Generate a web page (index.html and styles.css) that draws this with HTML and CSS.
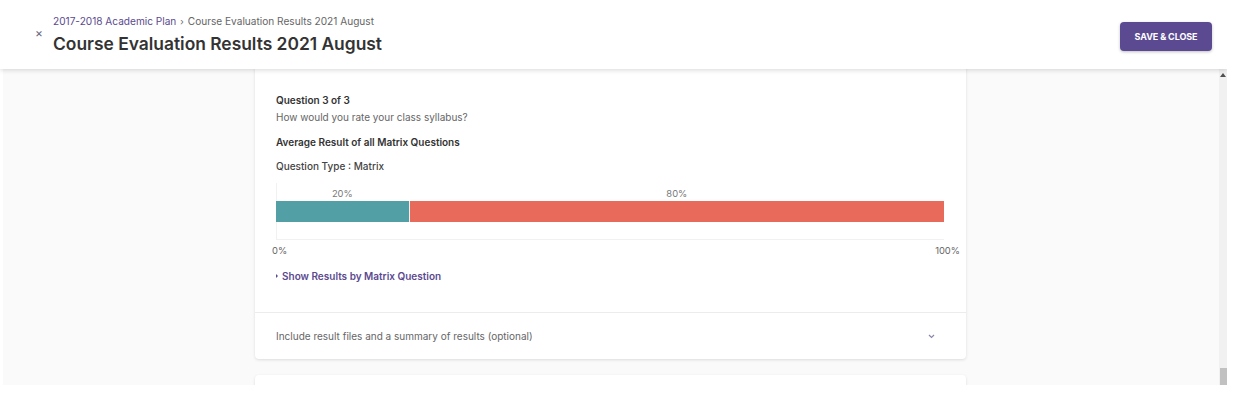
FILE: index.html
```html
<!DOCTYPE html>
<html lang="en">
<head>
<meta charset="utf-8">
<title>Course Evaluation Results 2021 August</title>
<link rel="stylesheet" href="styles.css">
</head>
<body>
<div class="frame">
  <header class="topbar">
    <button class="close" aria-label="Close">×</button>
    <div class="titles">
      <div class="crumbs"><a class="crumb-link">2017-2018 Academic Plan</a><span class="sep">›</span><span class="crumb-current">Course Evaluation Results 2021 August</span></div>
      <h1 class="title">Course Evaluation Results 2021 August</h1>
    </div>
    <button class="save">SAVE &amp; CLOSE</button>
  </header>
  <div class="viewport">
    <main class="content">
      <section class="card">
        <div class="question">
          <div class="q-num">Question 3 of 3</div>
          <div class="q-text">How would you rate your class syllabus?</div>
          <div class="q-avg">Average Result of all Matrix Questions</div>
          <div class="q-type">Question Type : Matrix</div>
          <div class="chart">
            <div class="plot">
              <div class="bar">
                <div class="seg teal" style="width:20%"><span class="seg-label">20%</span></div>
                <div class="seg coral" style="width:80%"><span class="seg-label">80%</span></div>
              </div>
            </div>
            <div class="axis"><span>0%</span><span>100%</span></div>
          </div>
          <div class="toggle"><span class="tri"></span>Show Results by Matrix Question</div>
        </div>
        <div class="include">
          <span>Include result files and a summary of results (optional)</span>
          <svg class="chev" width="7" height="5" viewBox="0 0 7 5"><path d="M1 1 L3.5 3.5 L6 1" fill="none" stroke="#8c87a8" stroke-width="1.2"/></svg>
        </div>
      </section>
      <section class="card next"></section>
    </main>
    <div class="scrollbar">
      <div class="arrow"></div>
      <div class="thumb"></div>
    </div>
  </div>
</div>
</body>
</html>
```
FILE: styles.css
```css
* { box-sizing: border-box; }
html, body { margin: 0; padding: 0; background: #fff; }
body { font-family: Inter, "Noto Sans", sans-serif; color: #333; }

.frame {
  width: 1227px;
  height: 385px;
  padding-left: 3px;
  display: flex;
  flex-direction: column;
  overflow: hidden;
}

.topbar {
  position: relative;
  z-index: 2;
  height: 69px;
  flex: none;
  background: #fff;
  box-shadow: 0 1px 5px rgba(0,0,0,0.16);
  display: flex;
  align-items: flex-start;
  margin-left: -3px;
  padding-left: 3px;
}
.close {
  border: 0;
  background: none;
  padding: 0;
  margin: 27px 0 0 32px;
  width: 8px;
  font: 400 12px/12px Inter, sans-serif;
  color: #6b6680;
}
.titles { margin: 15px 0 0 10px; flex: 1; }
.crumbs { font-size: 10.1px; line-height: 12px; color: #666; }
.crumb-link { color: #5b4a8f; }
.sep { margin: 0 4px; color: #666; font-size: 9px; }
.title {
  margin: 6px 0 0;
  font-size: 17.4px;
  line-height: 20px;
  font-weight: 600;
  color: #333;
}
.save {
  margin: 22px 15px 0 0;
  width: 92px;
  height: 29px;
  border: 0;
  border-radius: 4px;
  background: #5b4a92;
  color: #fff;
  font: 700 9px/1 Inter, sans-serif;
  letter-spacing: -0.1px;
  box-shadow: 0 1px 3px rgba(0,0,0,0.25);
}

.viewport { flex: 1; display: flex; background: #fafafa; min-height: 0; }
.content { flex: 1; padding-left: 252px; margin-top: -20px; }

.card {
  width: 711px;
  background: #fff;
  border-radius: 4px;
  box-shadow: 0 1px 3px rgba(0,0,0,0.12);
}
.question { padding: 44px 21px 29px; border-bottom: 1px solid #ececec; }
.q-num { font-size: 10px; font-weight: 600; line-height: 14px; color: #333; }
.q-text { font-size: 10px; line-height: 14px; color: #666; margin-top: 3px; }
.q-avg { font-size: 10px; font-weight: 600; line-height: 14px; color: #333; margin-top: 11px; }
.q-type { font-size: 10px; font-weight: 500; line-height: 14px; color: #444; margin-top: 10px; }

.chart { margin-top: 10px; width: 684px; }
.plot {
  width: 668px;
  height: 57px;
  border-left: 1px solid #f1f1f1;
  border-bottom: 1px solid #f1f1f1;
  padding-top: 18px;
}
.bar { display: flex; height: 21px; margin-left: -1px; }
.seg { position: relative; height: 100%; }
.teal { background: #539fa6; border-right: 1px solid #e8f2f3; }
.coral { background: #e86a5b; }
.seg-label {
  position: absolute;
  left: 0; right: 0;
  top: -13px;
  text-align: center;
  font-size: 9.4px;
  line-height: 11px;
  color: #777;
}
.axis {
  display: flex;
  justify-content: space-between;
  margin-left: -4px;
  margin-top: 5px;
  font-size: 9.4px;
  line-height: 11px;
  color: #666;
}
.toggle {
  margin-top: 13px;
  font-size: 10px;
  font-weight: 600;
  line-height: 14px;
  color: #5b4a8f;
  display: flex;
  align-items: center;
}
.tri {
  width: 0; height: 0;
  border-top: 2px solid transparent;
  border-bottom: 2px solid transparent;
  border-left: 2px solid #5b4a8f;
  margin-right: 4px;
}

.include {
  height: 46px;
  padding: 0 31px 0 21px;
  display: flex;
  align-items: center;
  justify-content: space-between;
  font-size: 10px;
  color: #666;
}
.chev { margin-top: 1px; }

.card.next { margin-top: 16px; height: 40px; }

.scrollbar {
  width: 8px;
  background: #f1f1f1;
  display: flex;
  flex-direction: column;
  justify-content: space-between;
  position: relative;
  z-index: 1;
}
.arrow {
  margin: 4px auto 0;
  width: 0; height: 0;
  border-left: 3px solid transparent;
  border-right: 3px solid transparent;
  border-bottom: 4px solid #505050;
}
.thumb { height: 17px; background: #c1c1c1; margin: 0 0 0 1px; }
```
